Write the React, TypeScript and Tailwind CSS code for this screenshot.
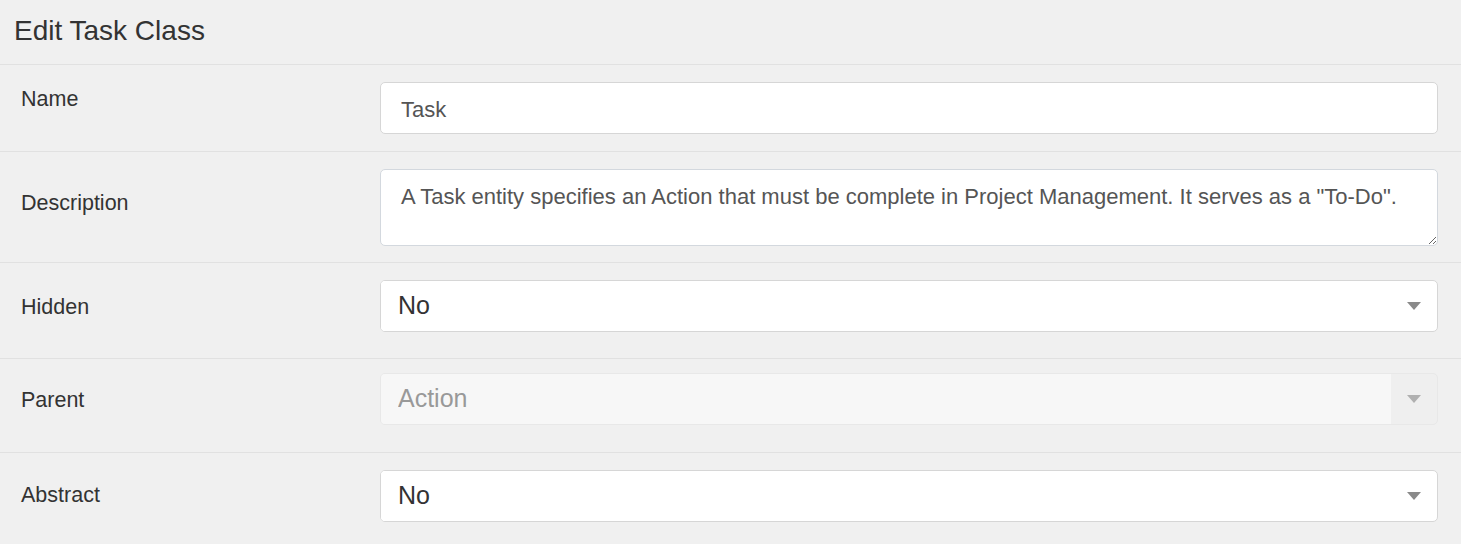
import type { ReactNode } from "react";

const font = { fontFamily: '"Liberation Sans", Arial, sans-serif' };

function Caret({ color }: { color: string }) {
  return (
    <svg width="14" height="8" viewBox="0 0 14 8">
      <path d="M0 0 L14 0 L7 8 Z" fill={color} />
    </svg>
  );
}

interface RowProps {
  label: string;
  rowClass: string;
  labelClass: string;
  children: ReactNode;
  last?: boolean;
}

function Row({ label, rowClass, labelClass, children, last }: RowProps) {
  return (
    <div className={`flex items-start ${last ? "" : "border-b border-[#e1e1e1]"} ${rowClass}`}>
      <div className={`w-[380px] shrink-0 pl-[21px] text-[21.5px] leading-[24px] text-[#333] ${labelClass}`}>
        {label}
      </div>
      <div className="flex-1 pr-[23px]">{children}</div>
    </div>
  );
}

function SelectBox({ value, disabled }: { value: string; disabled?: boolean }) {
  return (
    <div
      className={`flex h-[52px] overflow-hidden rounded-[5px] border ${
        disabled ? "border-[#e8e8e8] bg-[#efefef]" : "border-[#d6d6d6] bg-white"
      }`}
    >
      <select
        disabled={disabled}
        defaultValue={value}
        className={`flex-1 appearance-none pl-[17px] text-[25px] outline-none ${
          disabled ? "bg-[#f7f7f7] text-[#999]" : "bg-white text-[#333]"
        }`}
        style={font}
      >
        <option>{value}</option>
        {!disabled && <option>{value === "No" ? "Yes" : "No"}</option>}
      </select>
      <div className="flex w-[46px] items-center justify-center">
        <Caret color={disabled ? "#b0b0b0" : "#8a8a8a"} />
      </div>
    </div>
  );
}

export default function App() {
  return (
    <div className="min-h-[544px] w-full bg-[#f0f0f0]" style={font}>
      {/* Header */}
      <div className="flex h-[65px] items-center border-b border-[#e1e1e1] pb-[3px] pl-[14px]">
        <h1 className="text-[28px] text-[#333]">Edit Task Class</h1>
      </div>

      <Row label="Name" rowClass="pt-[17px] pb-[17px]" labelClass="pt-[5px]">
        <input
          defaultValue="Task"
          className="h-[52px] w-full rounded-[5px] border border-[#d6d6d6] bg-white pl-[20px] pt-[3px] text-[22px] text-[#555] outline-none"
          style={font}
        />
      </Row>

      <Row label="Description" rowClass="pt-[17px] pb-[16px]" labelClass="pt-[22px]">
        <textarea
          defaultValue={'A Task entity specifies an Action that must be complete in Project Management. It serves as a "To-Do".'}
          className="block h-[77px] w-full rounded-[5px] border border-[#d3d8de] bg-white px-[20px] pt-[14px] text-[22px] leading-[26px] text-[#555] outline-none"
          style={font}
        />
      </Row>

      <Row label="Hidden" rowClass="pt-[17px] pb-[26px]" labelClass="pt-[15px]">
        <SelectBox value="No" />
      </Row>

      <Row label="Parent" rowClass="pt-[14px] pb-[27px]" labelClass="pt-[15px]">
        <SelectBox value="Action" disabled />
      </Row>

      <Row label="Abstract" rowClass="pt-[17px] pb-[22px]" labelClass="pt-[13px]" last>
        <SelectBox value="No" />
      </Row>
    </div>
  );
}
